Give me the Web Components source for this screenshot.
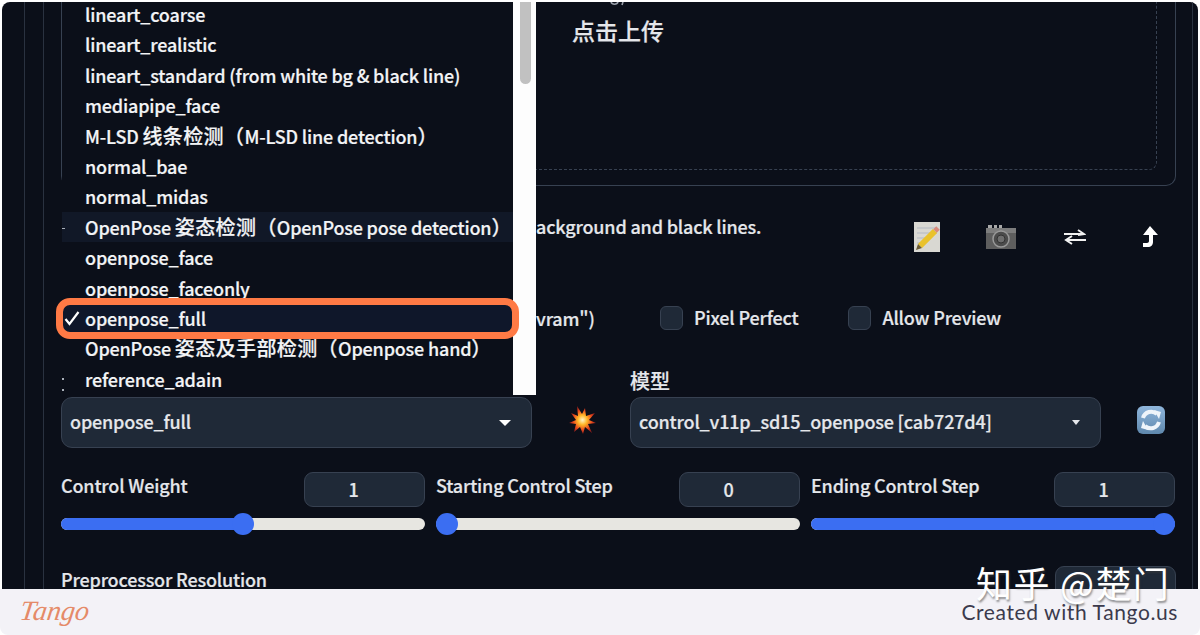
<!DOCTYPE html>
<html lang="zh">
<head>
<meta charset="utf-8">
<title>ControlNet</title>
<style>
  html, body { margin: 0; padding: 0; background: #fff; }
  body { width: 1200px; height: 635px; overflow: hidden; font-family: "Noto Sans CJK SC", "Noto Sans", sans-serif; }
</style>
</head>
<body>

<app-shell>
  <upload-box text="点击上传"></upload-box>

  <div slot="hint" class="hint">ackground and black lines.</div>
  <tool-icons slot="tools"></tool-icons>

  <span slot="low">vram")</span>
  <check-box slot="checks" label="Pixel Perfect"></check-box>
  <check-box slot="checks" label="Allow Preview"></check-box>

  <drop-select slot="pre" value="openpose_full" big></drop-select>
  <drop-select slot="model" value="control_v11p_sd15_openpose [cab727d4]"></drop-select>

  <num-slider slot="sliders" label="Control Weight" value="1" pct="50"></num-slider>
  <num-slider slot="sliders" label="Starting Control Step" value="0" pct="0"></num-slider>
  <num-slider slot="sliders" label="Ending Control Step" value="1" pct="100"></num-slider>

  <option-menu slot="menu"></option-menu>
</app-shell>
<tango-footer></tango-footer>

<script>
// panel with the frames, the rows and the overlays
class AppShell extends HTMLElement {
  constructor() {
    super();
    this.attachShadow({ mode: "open" });
    this.shadowRoot.innerHTML = `
      <style>
        :host {
          display: block;
          box-sizing: border-box;
          height: 589px;
          padding: 2px 2px 0;
          position: relative;
          color: #e5e7eb;
          font-size: 18px;
          letter-spacing: -.18px;
          font-weight: 500;
          -webkit-text-stroke: .2px;
          --line: #2a3240;
        }
        #panel {
          height: 587px;
          box-sizing: border-box;
          overflow: hidden;
          background: #0b0f19;
          border-radius: 8px 8px 0 0;
          padding: 0 5px 0 22px;
        }
        #frame {
          height: 100%;
          box-sizing: border-box;
          border-left: 1px solid var(--line);
          border-right: 1px solid var(--line);
          padding: 0 16px 0 18px;
        }
        #col {
          height: 100%;
          box-sizing: border-box;
          border-left: 1px solid var(--line);
          padding: 0 0 0 17px;
          position: relative;
        }
        #hint-row {
          display: flex;
          justify-content: space-between;
          height: 70px;
          padding: 0 0 0 475px;
        }
        #hint-row ::slotted(.hint) { margin-top: 25px; line-height: 30px; color: #e5e7eb; }
        #opts {
          display: flex;
          align-items: center;
          height: 30px;
          margin-top: 47px;
          padding-left: 475px;
        }
        #opts ::slotted(span) { width: 124px; }
        #labels {
          display: flex;
          height: 30px;
          margin-top: 32px;
          padding-left: 569px;
          align-items: center;
          font-size: 20px;
          letter-spacing: 0;
        }
        #selects { display: flex; margin-top: 2px; align-items: center; }
        #boom { width: 98px; box-sizing: border-box; padding-left: 4px; display: flex; justify-content: center; margin-top: -6px; }
        #refresh { margin-left: 35px; margin-top: -5px; display: flex; }
        #sliders { display: flex; gap: 11px; margin-top: 24px; }
        #res { display: flex; justify-content: space-between; margin-top: 36px; height: 40px; }
        #res span { line-height: 27px; }
        #res b {
          width: 121px; height: 36px; box-sizing: border-box;
          background: #1f2937; border: 1px solid #374151; border-radius: 9px;
        }
        #mark {
          position: absolute; left: 12px; top: 296px;
          width: 463px; height: 41px; box-sizing: border-box;
          border: 7px solid #ff7a45; border-radius: 14px;
        }
        .peek { position: absolute; left: 18px; width: 2px; height: 2px; background: #aab0ba; }
      </style>
      <div id="panel">
        <div id="frame">
          <div id="col">
            <slot></slot>
            <div id="hint-row"><slot name="hint"></slot><slot name="tools"></slot></div>
            <div id="opts"><slot name="low"></slot><slot name="checks"></slot></div>
            <div id="labels"><span>模型</span></div>
            <div id="selects">
              <slot name="pre"></slot>
              <div id="boom">
                <svg width="30" height="30" viewBox="0 0 30 30">
                  <defs><radialGradient id="bg"><stop offset="0" stop-color="#fff6c8"/><stop offset=".35" stop-color="#ffb627"/><stop offset=".7" stop-color="#e8481c"/><stop offset="1" stop-color="#8e1c1c"/></radialGradient></defs>
                  <path fill="url(#bg)" d="M9 1l5 8 3-6 1 8 9-3-6 7 7 3-8 1 4 9-7-6-2 7-3-7-6 5 2-8-7-1 7-3-5-7 7 3z"/>
                </svg>
              </div>
              <slot name="model"></slot>
              <div id="refresh">
                <svg width="30" height="30" viewBox="0 0 30 30">
                  <defs><linearGradient id="rg" x1="0" y1="0" x2="0" y2="1"><stop offset="0" stop-color="#8fb6dc"/><stop offset="1" stop-color="#5f88ad"/></linearGradient></defs>
                  <rect x="1" y="1" width="28" height="28" rx="6" fill="url(#rg)"/>
                  <path fill="none" stroke="#eef4fa" stroke-width="4" d="M7 13a8.5 8.5 0 0 1 14-4"/>
                  <path fill="#eef4fa" d="M18 5l7 2-2 7z"/>
                  <path fill="none" stroke="#eef4fa" stroke-width="4" d="M23 17a8.5 8.5 0 0 1-14 4"/>
                  <path fill="#eef4fa" d="M12 25l-7-2 2-7z"/>
                </svg>
              </div>
            </div>
            <div id="sliders"><slot name="sliders"></slot></div>
            <div id="res"><span>Preprocessor Resolution</span><b></b></div>
            <slot name="menu"></slot>
            <div id="mark"></div>
            <i class="peek" style="top:226px;width:3px;height:1px"></i>
            <i class="peek" style="top:376px"></i>
            <i class="peek" style="top:387px"></i>
          </div>
        </div>
      </div>
    `;
  }
}

// bottom of the image box, it starts above the fold
class UploadBox extends HTMLElement {
  constructor() {
    super();
    this.attachShadow({ mode: "open" });
    this.shadowRoot.innerHTML = `
      <style>
        :host {
          display: block;
          box-sizing: border-box;
          height: 184px;
          border: 1px solid #374151;
          border-top: 0;
          border-radius: 0 0 10px 10px;
          padding: 0 18px 15px 18px;
        }
        #drop {
          height: 100%;
          box-sizing: border-box;
          border: 1px dashed #374151;
          border-top: 0;
          border-radius: 0 0 8px 8px;
          padding: 0 0 0 491px;
          font-size: 23px;
          line-height: 34px;
          letter-spacing: 0;
          color: #e5e7eb;
        }
        /* what is left of the line above, cut by the top of the window */
        svg { display: block; margin: 0 0 7px 38px; }
      </style>
      <div id="drop">
        <svg width="16" height="4" viewBox="0 0 16 4" fill="none" stroke="#9aa0aa" stroke-width="1.6">
          <path d="M1 0c1 3 6 3 7 0M13 0l-1 3"/>
        </svg>
        <span id="t"></span>
      </div>
    `;
    this.shadowRoot.getElementById("t").textContent = this.getAttribute("text");
  }
}

class ToolIcons extends HTMLElement {
  constructor() {
    super();
    this.attachShadow({ mode: "open" });
    this.shadowRoot.innerHTML = `
      <style>
        :host { display: flex; align-items: center; height: 30px; margin-top: 36px; margin-right: 18px; }
        svg { display: block; }
        #a { margin-right: 45px; }
        #b { margin-right: 48px; }
        #c { margin-right: 56px; }
      </style>
      <svg id="a" width="28" height="32" viewBox="0 0 28 32">
        <rect x="1" y="1" width="26" height="30" fill="#d9d8d2"/>
        <path stroke="#b3b8c2" stroke-width="1" d="M4 7h20M4 12h20M4 17h12M4 22h8"/>
        <path stroke="#e9c22c" stroke-width="6" d="M7 25L22 10"/>
        <path stroke="#d98a7c" stroke-width="5" d="M22 10l3-3"/>
        <path fill="#6b5a32" d="M3 29l2-6 4 4z"/>
      </svg>
      <svg id="b" width="30" height="24" viewBox="0 0 30 24">
        <rect x="0" y="3" width="30" height="21" fill="#5e5e5e"/>
        <rect x="0" y="3" width="30" height="5" fill="#7d7d7d"/>
        <path fill="#a8a8a8" d="M2 0h4v3H2zM8 0h3v3H8zM13 0h3v3h-3z"/>
        <circle cx="15" cy="14" r="8" fill="#4c4c4c" stroke="#999" stroke-width="1.5"/>
        <circle cx="15" cy="14" r="4" fill="#6e6e6e" stroke="#333"/>
      </svg>
      <svg id="c" width="22" height="16" viewBox="0 0 22 16" fill="none" stroke="#f1f1f1" stroke-width="2">
        <path d="M0 5h20M14 1l6 4-6 1"/>
        <path d="M22 11H2M8 7l-6 4 6 4"/>
      </svg>
      <svg id="d" width="16" height="22" viewBox="0 0 16 22">
        <path fill="#fff" d="M8 0l8 9h-5v7c0 3-2 5-5 5H1v-4h4c1 0 2-1 2-2V9H1z"/>
      </svg>
    `;
  }
}

class CheckBox extends HTMLElement {
  constructor() {
    super();
    this.attachShadow({ mode: "open" });
    this.shadowRoot.innerHTML = `
      <style>
        :host { display: inline-flex; align-items: center; gap: 11px; margin-right: 50px; }
        i {
          width: 23px; height: 24px; box-sizing: border-box;
          background: #1f2937; border: 1px solid #374151; border-radius: 6px;
        }
        span { margin-top: -2px; }
      </style>
      <i></i><span></span>
    `;
    this.shadowRoot.querySelector("span").textContent = this.getAttribute("label");
  }
}

class DropSelect extends HTMLElement {
  constructor() {
    super();
    this.attachShadow({ mode: "open" });
    this.shadowRoot.innerHTML = `
      <style>
        :host {
          display: flex;
          align-items: center;
          justify-content: space-between;
          box-sizing: border-box;
          width: 471px;
          height: 51px;
          padding: 0 20px 0 8px;
          background: #1f2937;
          border: 1px solid #374151;
          border-radius: 11px;
        }
        span { margin-top: -3px; }
        i { width: 0; height: 0; border: 4px solid transparent; border-top: 5px solid #e5e7eb; border-bottom: 0; }
        :host([big]) i { border-width: 6px 6px 0; border-top-color: #fff; }
      </style>
      <span></span><i></i>
    `;
    this.shadowRoot.querySelector("span").textContent = this.getAttribute("value");
  }
}

class NumSlider extends HTMLElement {
  constructor() {
    super();
    this.attachShadow({ mode: "open" });
    this.shadowRoot.innerHTML = `
      <style>
        :host { display: block; width: 364px; }
        #top { display: flex; justify-content: space-between; height: 35px; }
        #label { line-height: 27px; }
        #num {
          width: 121px; height: 35px; box-sizing: border-box;
          padding-right: 22px; text-align: center; line-height: 33px;
          background: #1f2937; border: 1px solid #374151; border-radius: 9px;
        }
        #track {
          position: relative;
          height: 12px;
          margin-top: 11px;
          border-radius: 6px;
          background: #e7e6e1;
        }
        #fill { height: 100%; border-radius: 6px; background: #3b6ef2; }
        #thumb {
          position: absolute; top: -5px;
          width: 22px; height: 22px; border-radius: 50%;
          background: #3b6ef2;
        }
      </style>
      <div id="top"><span id="label"></span><span id="num"></span></div>
      <div id="track"><div id="fill"></div><div id="thumb"></div></div>
    `;
    const pct = Number(this.getAttribute("pct"));
    const $ = (id) => this.shadowRoot.getElementById(id);
    $("label").textContent = this.getAttribute("label");
    $("num").textContent = this.getAttribute("value");
    $("fill").style.width = pct + "%";
    // thumb stays inside the track at both ends
    $("thumb").style.left = `calc((100% - 22px) * ${pct / 100})`;
  }
}

// open list of the preprocessor dropdown
class OptionMenu extends HTMLElement {
  connectedCallback() {
    const items = [
      "lineart_coarse",
      "lineart_realistic",
      "lineart_standard (from white bg & black line)",
      "mediapipe_face",
      "M-LSD 线条检测（M-LSD line detection）",
      "normal_bae",
      "normal_midas",
      "OpenPose 姿态检测（OpenPose pose detection）",
      "openpose_face",
      "openpose_faceonly",
      "openpose_full",
      "OpenPose 姿态及手部检测（Openpose hand）",
      "reference_adain",
    ];
    const check = `<svg width="16" height="15" viewBox="0 0 16 15" fill="none" stroke="#fff" stroke-width="2.2"><path d="M1.5 8l4 5L14.5 1"/></svg>`;
    this.attachShadow({ mode: "open" });
    this.shadowRoot.innerHTML = `
      <style>
        :host {
          display: flex;
          position: absolute;
          left: 18px; top: 0;
          width: 474px; height: 393px;
          overflow: hidden;
          color: #f3f4f6;
        }
        ul { flex: 1; margin: -3px 0 0; padding: 0; list-style: none; background: #0b0f19; }
        li {
          height: 30.4px; line-height: 30px;
          padding-left: 23px;
          position: relative;
          white-space: nowrap;
        }
        li b { font-weight: inherit; font-size: 20px; letter-spacing: .4px; }
        li.hover { background: #111827; }
        li.sel { background: #0f172a; }
        li svg { position: absolute; left: 2px; top: 8px; }
        #bar { width: 23px; background: #fdfdfd; }
        #bar div { width: 11px; height: 82px; margin-left: 7px; border-radius: 0 0 6px 6px; background: #c1c1c1; }
      </style>
      <ul>${items.map((t) => {
        const sel = t === "openpose_full";
        const cls = sel ? "sel" : t.includes("pose detection") ? "hover" : "";
        // the Chinese runs are set larger than the latin ones
        const html = t.replace("&", "&amp;").replace(/[\u3000-\u9fff\uff00-\uffef]+/g, "<b>$&</b>");
        return `<li class="${cls}">${sel ? check : ""}${html}</li>`;
      }).join("")}</ul>
      <div id="bar"><div></div></div>
    `;
  }
}

class TangoFooter extends HTMLElement {
  constructor() {
    super();
    this.attachShadow({ mode: "open" });
    this.shadowRoot.innerHTML = `
      <style>
        :host {
          display: flex;
          justify-content: space-between;
          box-sizing: border-box;
          height: 46px;
          padding: 0 22px 0 20px;
          background: #f3f2f7;
          border-radius: 0 0 8px 8px;
          position: relative;
        }
        #logo {
          font: italic 400 28px "Liberation Serif", serif;
          color: #e58a68;
          line-height: 44px;
          transform: skewX(-8deg);
        }
        #by {
          font: 400 21px "Lato", sans-serif;
          color: #3b3a4c;
          line-height: 22px;
          margin-top: 12px;
          height: 22px;
          letter-spacing: .6px;
        }
        #wm {
          position: absolute;
          right: 30px; top: -25px;
          font: 400 36px/36px "Noto Sans CJK SC", sans-serif;
          letter-spacing: 1.3px;
          color: #fff;
          text-shadow: 1px 2px 2px rgba(60,60,60,.55);
          white-space: nowrap;
        }
      </style>
      <span id="logo">Tango</span>
      <span id="by">Created with Tango.us</span>
      <span id="wm">知乎 @楚门</span>
    `;
  }
}

customElements.define("app-shell", AppShell);
customElements.define("upload-box", UploadBox);
customElements.define("tool-icons", ToolIcons);
customElements.define("check-box", CheckBox);
customElements.define("drop-select", DropSelect);
customElements.define("num-slider", NumSlider);
customElements.define("option-menu", OptionMenu);
customElements.define("tango-footer", TangoFooter);
</script>
</body>
</html>
